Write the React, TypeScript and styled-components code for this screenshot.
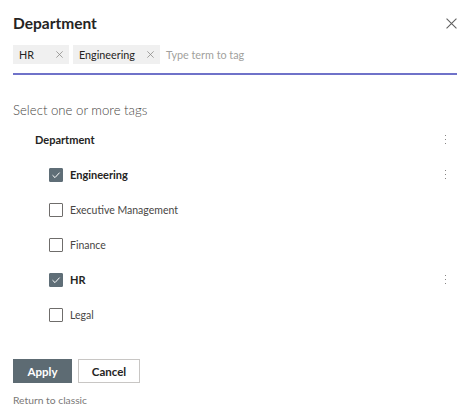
import React from 'react'
import styled, { createGlobalStyle } from 'styled-components'

const GlobalStyle = createGlobalStyle`
  html, body {
    margin: 0;
    padding: 0;
    background: #ffffff;
  }
  body {
    font-family: Lato, 'Open Sans', Arial, sans-serif;
    color: #252423;
  }
`

const Panel = styled.div`
  width: 474px;
  height: 418px;
  box-sizing: border-box;
  padding: 12px 17px 0 13px;
  display: flex;
  flex-direction: column;
`

const Header = styled.div`
  display: flex;
  align-items: center;
  justify-content: space-between;
  height: 22px;
`

const Title = styled.h1`
  margin: 0;
  font-size: 15.5px;
  font-weight: 700;
  color: #252423;
`

const IconButton = styled.button`
  display: flex;
  align-items: center;
  justify-content: center;
  padding: 0;
  border: none;
  background: none;
  color: #616161;
  cursor: pointer;
`

const TagField = styled.div`
  display: flex;
  align-items: center;
  gap: 4px;
  margin-top: 11px;
  padding-bottom: 9px;
  border-bottom: 2px solid #6f72c9;
`

const Chip = styled.span`
  display: flex;
  align-items: center;
  justify-content: space-between;
  height: 19px;
  box-sizing: border-box;
  padding: 0 6px 0 6px;
  background: #f0f0f0;
  font-size: 10.8px;
  color: #252423;
  width: ${p => p.$width}px;
`

const ChipClose = styled.span`
  display: flex;
  align-items: center;
  color: #8a8886;
`

const Placeholder = styled.span`
  margin-left: 2px;
  font-size: 10.8px;
  color: #a19f9d;
`

const SectionLabel = styled.div`
  margin-top: 27px;
  font-size: 13.2px;
  font-weight: 300;
  color: #484644;
`

const Tree = styled.div`
  display: flex;
  flex-direction: column;
  margin-top: 4px;
`

const Row = styled.div`
  display: flex;
  align-items: center;
  justify-content: space-between;
  height: 35px;
  padding-left: ${p => p.$indent}px;
  padding-right: 11px;
`

const RowLabel = styled.label`
  display: flex;
  align-items: center;
  gap: 7px;
  font-size: ${p => (p.$bold ? 11 : 10.5)}px;
  font-weight: ${p => (p.$bold ? 700 : 400)};
  color: ${p => (p.$bold ? '#252423' : '#484644')};
`

const Box = styled.span`
  display: flex;
  align-items: center;
  justify-content: center;
  width: 14px;
  height: 14px;
  box-sizing: border-box;
  border: 1px solid ${p => (p.$checked ? '#5f6e77' : '#6f6d6b')};
  border-radius: 1px;
  background: ${p => (p.$checked ? '#5f6e77' : '#ffffff')};
`

const Kebab = styled.span`
  display: flex;
  flex-direction: column;
  gap: 2.5px;
  & > i {
    display: block;
    width: 1.5px;
    height: 1.5px;
    border-radius: 50%;
    background: #605e5c;
  }
`

const Actions = styled.div`
  display: flex;
  gap: 6px;
  margin-top: 27px;
`

const Button = styled.button`
  height: 24px;
  box-sizing: border-box;
  padding: 0;
  width: ${p => p.$width}px;
  font-family: inherit;
  font-size: 11.5px;
  font-weight: 700;
  border: 1px solid ${p => (p.$primary ? '#5d6b73' : '#c8c6c4')};
  background: ${p => (p.$primary ? '#5d6b73' : '#ffffff')};
  color: ${p => (p.$primary ? '#ffffff' : '#252423')};
  cursor: pointer;
`

const ClassicLink = styled.a`
  margin-top: 11px;
  font-size: 10.3px;
  color: #7a7877;
  text-decoration: none;
`

const Cross = ({ size, stroke }: { size: number; stroke: number }) => (
  <svg width={size} height={size} viewBox="0 0 10 10">
    <path d="M0.5 0.5 L9.5 9.5 M9.5 0.5 L0.5 9.5" stroke="currentColor" strokeWidth={stroke} fill="none" />
  </svg>
)

const Check = () => (
  <svg width="10" height="10" viewBox="0 0 10 10">
    <path d="M1.5 5.2 L4 7.6 L8.6 2.6" stroke="#ffffff" strokeWidth="1" fill="none" />
  </svg>
)

const Dots = () => (
  <Kebab>
    <i />
    <i />
    <i />
  </Kebab>
)

const terms = [
  { name: 'Engineering', checked: true },
  { name: 'Executive Management', checked: false },
  { name: 'Finance', checked: false },
  { name: 'HR', checked: true },
  { name: 'Legal', checked: false }
]

const App: React.FC = () => {
  return (
    <>
      <GlobalStyle />
      <Panel>
        <Header>
          <Title>Department</Title>
          <IconButton aria-label="Close">
            <Cross size={11} stroke={1} />
          </IconButton>
        </Header>

        <TagField>
          <Chip $width={56}>
            HR
            <ChipClose><Cross size={7} stroke={1.1} /></ChipClose>
          </Chip>
          <Chip $width={87}>
            Engineering
            <ChipClose><Cross size={7} stroke={1.1} /></ChipClose>
          </Chip>
          <Placeholder>Type term to tag</Placeholder>
        </TagField>

        <SectionLabel>Select one or more tags</SectionLabel>

        <Tree>
          <Row $indent={22}>
            <RowLabel $bold>Department</RowLabel>
            <Dots />
          </Row>
          {terms.map(term => (
            <Row key={term.name} $indent={36}>
              <RowLabel $bold={term.checked}>
                <Box $checked={term.checked}>{term.checked && <Check />}</Box>
                {term.name}
              </RowLabel>
              {term.checked && <Dots />}
            </Row>
          ))}
        </Tree>

        <Actions>
          <Button $primary $width={59}>Apply</Button>
          <Button $width={62}>Cancel</Button>
        </Actions>
        <ClassicLink href="#">Return to classic</ClassicLink>
      </Panel>
    </>
  )
}

export default App
